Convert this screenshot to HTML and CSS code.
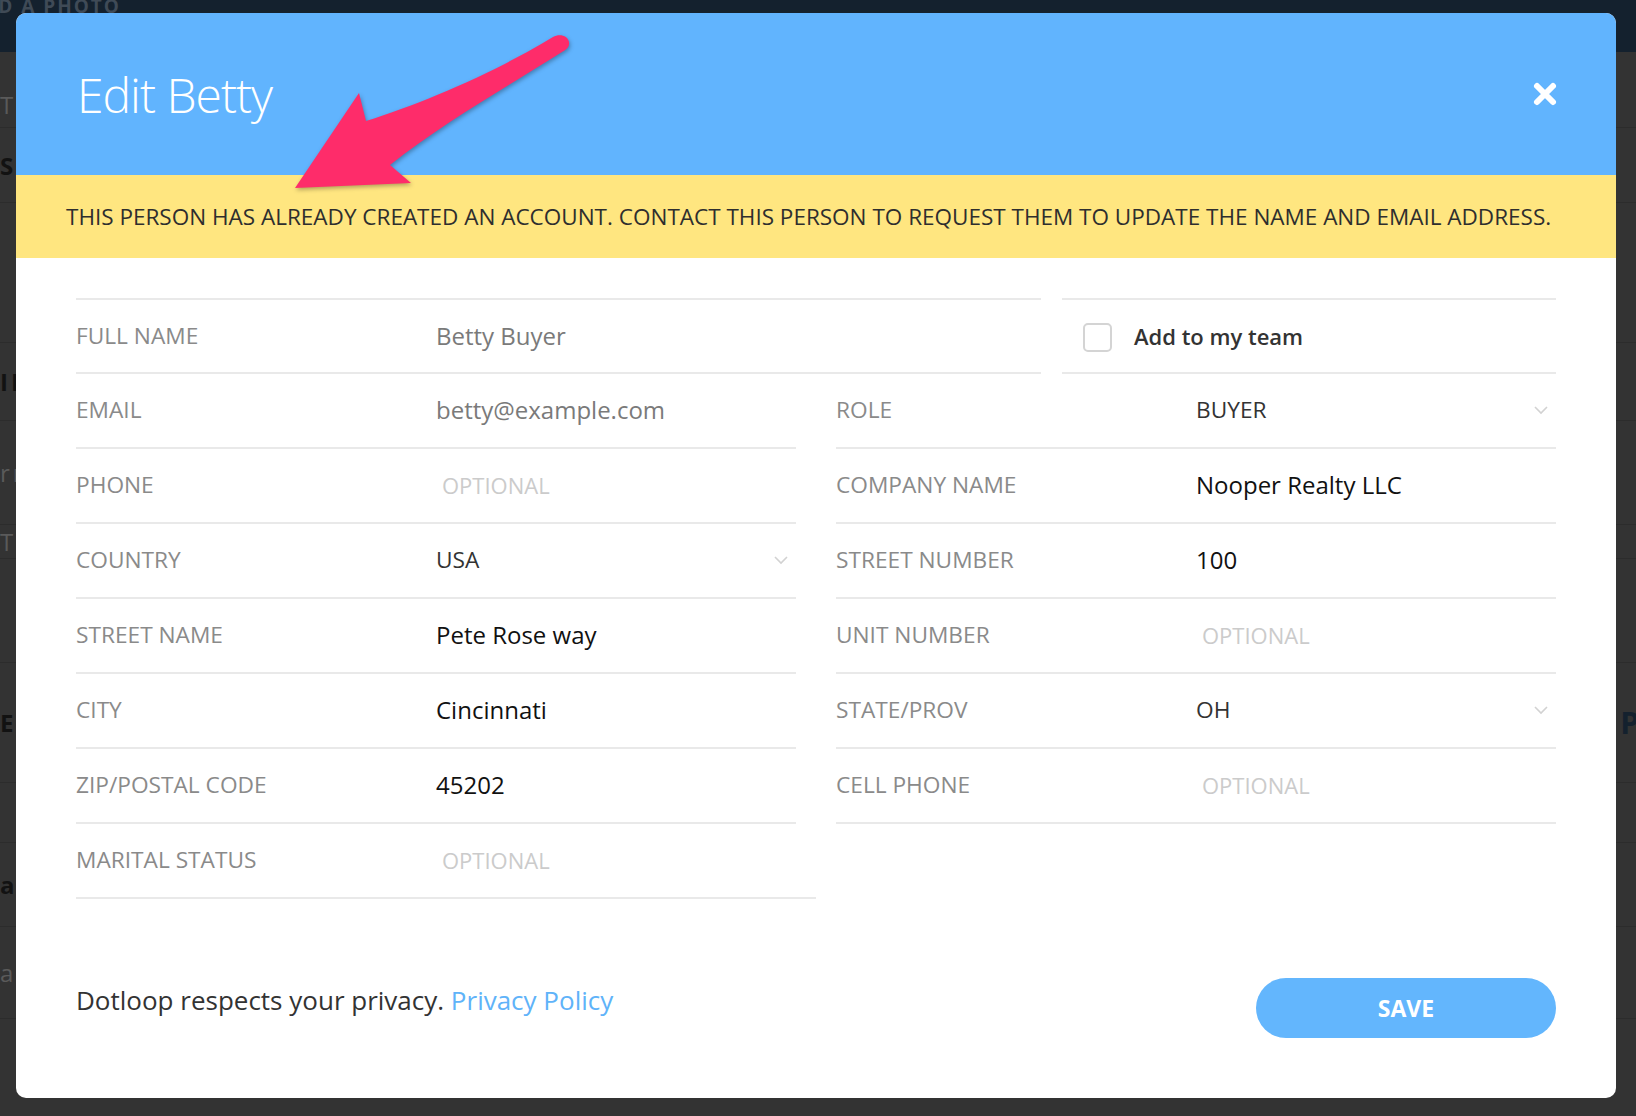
FILE: index.html
```html
<!DOCTYPE html>
<html lang="en">
<head>
    <meta charset="UTF-8">
    <meta name="viewport" content="width=device-width, initial-scale=1.0">
    <title>Edit Betty</title>
    <link rel="stylesheet" href="styles.css">
</head>
<body>

<!-- Page behind the modal -->
<div class="page">
    <div class="page-top"><span class="page-top-text">ADD A PHOTO</span></div>
    <div class="page-row row-a"><span class="muted">TIONS</span></div>
    <div class="page-row row-b"><span class="strong">SETTINGS</span></div>
    <div class="page-row row-c"></div>
    <div class="page-row row-d"><span class="strong">ILS</span></div>
    <div class="page-row row-e"><span class="muted">rn</span></div>
    <div class="page-row row-f"><span class="muted">T</span></div>
    <div class="page-row row-g"></div>
    <div class="page-row row-h"><span class="strong">E</span><span class="strong blue">P</span></div>
    <div class="page-row row-i"></div>
    <div class="page-row row-j"><span class="strong">a</span></div>
    <div class="page-row row-k"><span class="muted">a</span></div>
</div>

<div class="overlay">
    <div class="modal">
        <div class="modal-header">
            <h1>Edit Betty</h1>
            <button class="close" aria-label="Close">
                <svg width="26" height="26" viewBox="0 0 26 26">
                    <path d="M5 5 L21 21 M21 5 L5 21" stroke="#fff" stroke-width="6" stroke-linecap="round"/>
                </svg>
            </button>
        </div>

        <div class="notice">
            This person has already created an account. Contact this person to request them to update the name and email address.
        </div>

        <div class="modal-body">
            <div class="top-row">
                <div class="field field-wide">
                    <span class="label">Full Name</span>
                    <span class="value disabled">Betty Buyer</span>
                </div>
                <label class="team">
                    <span class="checkbox"></span>
                    <span>Add to my team</span>
                </label>
            </div>

            <div class="columns">
                <div class="column">
                    <div class="field">
                        <span class="label">Email</span>
                        <span class="value disabled">betty@example.com</span>
                    </div>
                    <div class="field">
                        <span class="label">Phone</span>
                        <span class="value placeholder">Optional</span>
                    </div>
                    <div class="field">
                        <span class="label">Country</span>
                        <span class="value select">USA</span>
                        <svg class="chevron" width="14" height="9" viewBox="0 0 14 9"><polyline points="1,1 7,7 13,1" fill="none" stroke="#d2d2d2" stroke-width="1.6"/></svg>
                    </div>
                    <div class="field">
                        <span class="label">Street Name</span>
                        <span class="value">Pete Rose way</span>
                    </div>
                    <div class="field">
                        <span class="label">City</span>
                        <span class="value">Cincinnati</span>
                    </div>
                    <div class="field">
                        <span class="label">Zip/Postal Code</span>
                        <span class="value">45202</span>
                    </div>
                    <div class="field field-last">
                        <span class="label">Marital Status</span>
                        <span class="value placeholder">Optional</span>
                    </div>
                </div>

                <div class="column">
                    <div class="field">
                        <span class="label">Role</span>
                        <span class="value select">BUYER</span>
                        <svg class="chevron" width="14" height="9" viewBox="0 0 14 9"><polyline points="1,1 7,7 13,1" fill="none" stroke="#d2d2d2" stroke-width="1.6"/></svg>
                    </div>
                    <div class="field">
                        <span class="label">Company Name</span>
                        <span class="value">Nooper Realty LLC</span>
                    </div>
                    <div class="field">
                        <span class="label">Street Number</span>
                        <span class="value">100</span>
                    </div>
                    <div class="field">
                        <span class="label">Unit Number</span>
                        <span class="value placeholder">Optional</span>
                    </div>
                    <div class="field">
                        <span class="label">State/Prov</span>
                        <span class="value select">OH</span>
                        <svg class="chevron" width="14" height="9" viewBox="0 0 14 9"><polyline points="1,1 7,7 13,1" fill="none" stroke="#d2d2d2" stroke-width="1.6"/></svg>
                    </div>
                    <div class="field">
                        <span class="label">Cell Phone</span>
                        <span class="value placeholder">Optional</span>
                    </div>
                </div>
            </div>

            <div class="modal-footer">
                <p class="privacy">Dotloop respects your privacy. <a href="#">Privacy Policy</a></p>
                <button class="save">SAVE</button>
            </div>
        </div>

        <!-- annotation arrow -->
        <svg class="arrow" width="600" height="200" viewBox="16 13 600 200">
            <path d="M295,188 L359,93 L366,121 C420,104 490,75 553,37 C560,33 568,36 569,42 C570,47 566,50 562,52 C505,88 440,125 390,165 L411,183 Z" fill="#fe2c6a"/>
        </svg>
    </div>
</div>

</body>
</html>
```

FILE: styles.css
```css
body {
    margin: 0;
    padding: 0;
    font-family: "Open Sans", "Liberation Sans", sans-serif;
    background-color: #333333;
    overflow: hidden;
}

/* Page behind the overlay */
.page {
    height: 100vh;
}

.page-top {
    height: 52px;
    background-color: #14212e;
    overflow: hidden;
}

.page-top-text {
    display: block;
    margin-left: -33px;
    margin-top: -7px;
    font-size: 19px;
    font-weight: 700;
    letter-spacing: 2px;
    color: #3f4a56;
}

.page-row {
    display: flex;
    justify-content: space-between;
    align-items: center;
    border-bottom: 1px solid #2c2c2c;
    font-size: 24px;
    white-space: nowrap;
    overflow: hidden;
}

.page-row .strong {
    font-weight: 700;
    color: #121212;
    letter-spacing: 3px;
}

.page-row .muted {
    color: #5a5a5a;
    letter-spacing: 3px;
}

.page-row .blue {
    color: #14212e;
    font-size: 30px;
    margin-right: -6px;
}

.row-a { height: 69px; align-items: flex-end; padding-bottom: 6px; }
.row-b { height: 74px; }
.row-c { height: 139px; }
.row-d { height: 77px; }
.row-e { height: 103px; }
.row-f { height: 33px; }
.row-g { height: 103px; }
.row-h { height: 119px; }
.row-i { height: 59px; }
.row-j { height: 83px; }
.row-k { height: 91px; }

/* Modal */
.overlay {
    position: fixed;
    top: 0;
    left: 0;
    right: 0;
    bottom: 0;
    padding: 13px 0 0 16px;
}

.modal {
    position: relative;
    width: 1600px;
    height: 1085px;
    background-color: #ffffff;
    border-radius: 10px;
    overflow: hidden;
}

.modal-header {
    height: 162px;
    background-color: #61b4fe;
    display: flex;
    justify-content: space-between;
    align-items: center;
    padding: 0 58px 0 61px;
}

.modal-header h1 {
    margin: 0;
    font-size: 48px;
    font-weight: 300;
    color: #ffffff;
    letter-spacing: -1px;
}

.close {
    background: none;
    border: none;
    padding: 0;
    cursor: pointer;
    display: flex;
}

.notice {
    height: 83px;
    background-color: #ffe680;
    display: flex;
    align-items: center;
    padding-left: 50px;
    font-size: 22.5px;
    color: #2e2e2e;
    text-transform: uppercase;
}

.modal-body {
    padding: 40px 60px 60px 60px;
}

.top-row {
    display: flex;
    gap: 21px;
}

.field {
    height: 73px;
    display: flex;
    align-items: center;
    border-bottom: 2px solid #e9e9e9;
}

.top-row .field,
.team {
    height: 72px;
    border-top: 2px solid #e9e9e9;
}

.field-wide {
    width: 965px;
}

.team {
    flex: 1;
    display: flex;
    align-items: center;
    border-bottom: 2px solid #e9e9e9;
    padding-left: 21px;
    font-size: 22px;
    font-weight: 600;
    color: #333333;
    cursor: pointer;
}

.checkbox {
    width: 25px;
    height: 25px;
    border: 2px solid #d4d4d4;
    border-radius: 5px;
    margin-right: 22px;
    margin-top: 2px;
}

.columns {
    display: grid;
    grid-template-columns: 720px 720px;
    gap: 40px;
}

.field-last {
    margin-right: -20px;
}

.label {
    width: 360px;
    flex-shrink: 0;
    font-size: 22.7px;
    color: #8a8a8a;
    text-transform: uppercase;
    margin-top: -2px;
}

.value {
    flex: 1;
    font-size: 24px;
    color: #111111;
    margin-top: -2px;
}

.value.disabled {
    color: #7a7a7a;
}

.value.select {
    color: #333333;
    font-size: 22.7px;
}

.value.placeholder {
    color: #cbcbcb;
    font-size: 22px;
    padding-left: 6px;
    text-transform: uppercase;
}

.chevron {
    margin-right: 8px;
}

.modal-footer {
    display: flex;
    justify-content: space-between;
    align-items: center;
    margin-top: 79px;
}

.privacy {
    margin: 0 0 16px 0;
    font-size: 26px;
    color: #333333;
}

.privacy a {
    color: #5fb3f9;
    text-decoration: none;
}

.save {
    width: 300px;
    height: 60px;
    border: none;
    border-radius: 30px;
    background-color: #63b6fd;
    color: #ffffff;
    font-family: "Open Sans", "Liberation Sans", sans-serif;
    font-size: 23px;
    font-weight: 700;
    cursor: pointer;
}

.arrow {
    position: absolute;
    top: 0;
    left: 0;
    filter: drop-shadow(1px 2px 2px rgba(0, 0, 0, 0.3));
}
```
